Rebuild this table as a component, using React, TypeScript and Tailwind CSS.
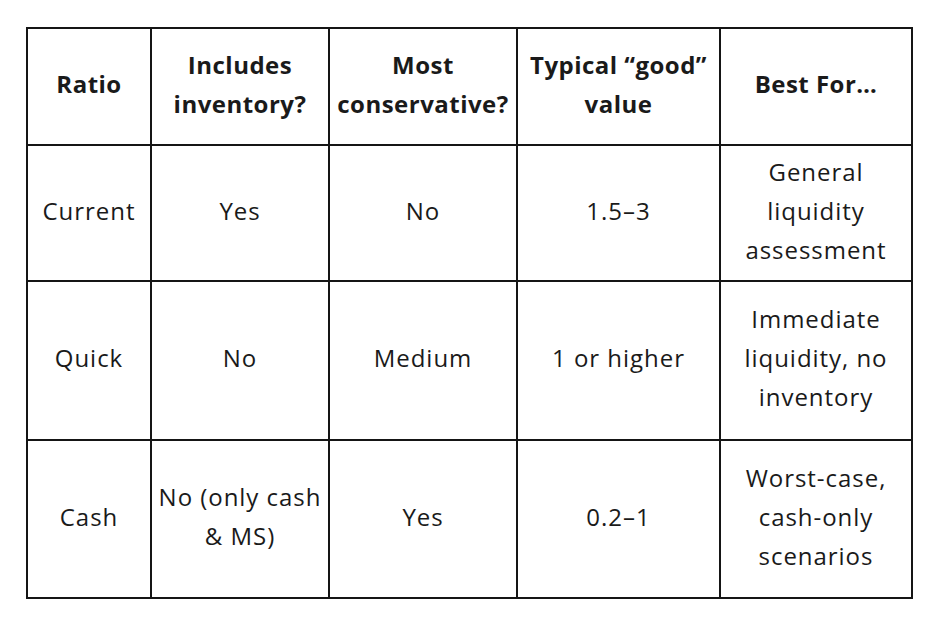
const cols = [124, 178, 188, 203, 192];

const header = ["Ratio", "Includes\ninventory?", "Most\nconservative?", "Typical \u201cgood\u201d\nvalue", "Best For\u2026"];

const rows = [
  { h: 136, cells: ["Current", "Yes", "No", "1.5\u20133", "General\nliquidity\nassessment"] },
  { h: 159, cells: ["Quick", "No", "Medium", "1 or higher", "Immediate\nliquidity, no\ninventory"] },
  { h: 158, cells: ["Cash", "No (only cash\n& MS)", "Yes", "0.2\u20131", "Worst-case,\ncash-only\nscenarios"] },
];

export default function App() {
  return (
    <div className="w-[939px] h-[626px] bg-white pl-[26px] pt-[27px] font-['Open_Sans','Lato',sans-serif] text-[#1a1a1a]">
      <table className="border-collapse table-fixed text-center text-[24px] leading-[39px] whitespace-pre-line">
        <colgroup>
          {cols.map((w, i) => (
            <col key={i} style={{ width: w }} />
          ))}
        </colgroup>
        <thead>
          <tr className="h-[117px]">
            {header.map((t, i) => (
              <th key={i} className="border-2 border-[#151515] px-0 pb-[6px] font-bold tracking-[0.02em]">
                {t}
              </th>
            ))}
          </tr>
        </thead>
        <tbody>
          {rows.map((r, ri) => (
            <tr key={ri} style={{ height: r.h }}>
              {r.cells.map((c, ci) => (
                <td key={ci} className="border-2 border-[#151515] px-0 pb-[6px] font-normal tracking-[0.04em]">
                  {c}
                </td>
              ))}
            </tr>
          ))}
        </tbody>
      </table>
    </div>
  );
}
